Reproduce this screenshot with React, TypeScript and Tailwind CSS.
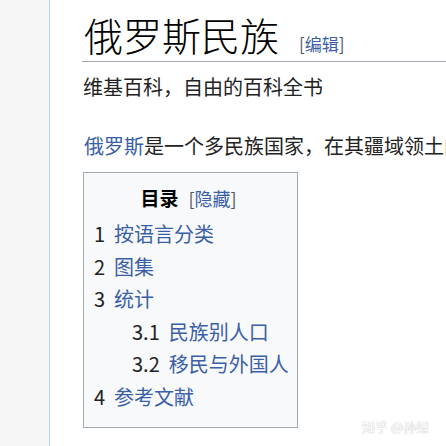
const toc = [
  { num: "1", label: "按语言分类", level: 1 },
  { num: "2", label: "图集", level: 1 },
  { num: "3", label: "统计", level: 1 },
  { num: "3.1", label: "民族别人口", level: 2 },
  { num: "3.2", label: "移民与外国人", level: 2 },
  { num: "4", label: "参考文献", level: 1 },
];

export default function App() {
  return (
    <div className="relative flex h-[446px] w-[446px] overflow-hidden bg-white font-['Noto_Sans_CJK_SC','Noto_Sans',sans-serif] text-[#222]">
      {/* sidebar strip */}
      <div className="w-[50px] shrink-0 border-r border-[#a7d7f9] bg-[#f6f6f6]" />

      <main className="min-w-0 flex-1 pl-[32px]">
        <h1 className="whitespace-nowrap border-b border-[#a2a9b1] pb-[5px] pt-[12px] text-[39px] font-light leading-[44px] text-black">
          <span className="pl-[2px]">俄罗斯民族</span>
          <span className="ml-[20px] text-[17px] font-normal leading-none text-[#54595d]">
            [<span className="text-[#3a5fa8]">编辑</span>]
          </span>
        </h1>

        <div className="mt-[11px] pl-[1px] text-[20px] leading-[28px]">
          维基百科，自由的百科全书
        </div>

        <p className="mt-[31px] whitespace-nowrap pl-[2px] text-[20px] leading-[28px]">
          <span className="text-[#3a5fa8]">俄罗斯</span>
          是一个多民族国家，在其疆域领土内生活着
        </p>

        <div className="ml-[1px] mt-[12px] w-[215px] border border-[#a2a9b1] bg-[#f8f9fa] pb-[14px] pt-[11px]">
          <div className="flex h-[28px] items-baseline justify-center pr-[4px] text-[19px] leading-[28px]">
            <span className="font-bold text-black">目录</span>
            <span className="ml-[10px] text-[18px] text-[#54595d]">
              [<span className="text-[#3a5fa8]">隐藏</span>]
            </span>
          </div>
          <ul className="mt-[6px] text-[20px] leading-[32.5px]">
            {toc.map((item) => (
              <li
                key={item.num}
                className={item.level === 2 ? "pl-[48px]" : "pl-[10px]"}
              >
                <span className="pr-[9px]">{item.num}</span>
                <span className="text-[#3a5fa8]">{item.label}</span>
              </li>
            ))}
          </ul>
        </div>
      </main>

      <div className="absolute left-[362px] top-[418px] text-[13px] leading-[18px] text-white [text-shadow:0_0_1px_#a0a0a0]">
        知乎 @孙绿
      </div>
    </div>
  );
}
